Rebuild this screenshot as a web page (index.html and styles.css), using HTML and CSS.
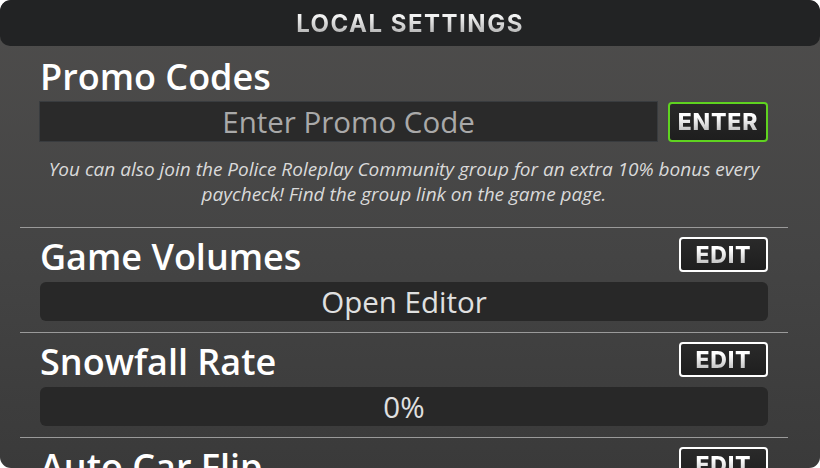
FILE: index.html
```html
<!DOCTYPE html>
<html>
<head>
<meta charset="utf-8">
<link rel="stylesheet" href="styles.css">
</head>
<body>
<div class="panel">
  <header class="header"><span class="header-text">LOCAL SETTINGS</span></header>
  <div class="content">
    <section class="promo">
      <h2 class="title">Promo Codes</h2>
      <div class="promo-row">
        <div class="input">Enter Promo Code</div>
        <button class="btn btn-enter"><span class="btn-text">ENTER</span></button>
      </div>
      <p class="note">You can also join the Police Roleplay Community group for an extra 10% bonus every paycheck! Find the group link on the game page.</p>
    </section>
    <section class="setting">
      <div class="setting-head">
        <h2 class="title">Game Volumes</h2>
        <button class="btn btn-edit"><span class="btn-text">EDIT</span></button>
      </div>
      <div class="bar">Open Editor</div>
    </section>
    <section class="setting">
      <div class="setting-head">
        <h2 class="title">Snowfall Rate</h2>
        <button class="btn btn-edit"><span class="btn-text">EDIT</span></button>
      </div>
      <div class="bar">0%</div>
    </section>
    <section class="setting">
      <div class="setting-head">
        <h2 class="title">Auto Car Flip</h2>
        <button class="btn btn-edit"><span class="btn-text">EDIT</span></button>
      </div>
      <div class="bar">Enabled</div>
    </section>
  </div>
</div>
</body>
</html>
```
FILE: styles.css
```css
html, body {
  margin: 0;
  padding: 0;
  background: #ffffff;
}
.panel {
  width: 820px;
  height: 468px;
  border-radius: 11px;
  overflow: hidden;
  background: linear-gradient(180deg, #4e4d4c 0%, #444444 55%, #3a3a3a 100%);
  font-family: "Open Sans", "Noto Sans", sans-serif;
  color: #ffffff;
}
.header {
  height: 46px;
  background: #222324;
  border-radius: 10px;
  display: flex;
  align-items: center;
  justify-content: center;
  font-family: Inter, "DejaVu Sans", sans-serif;
  font-weight: 700;
  font-size: 24px;
  letter-spacing: 1.5px;
  color: #d8d8d8;
}
.header-text {
  background: linear-gradient(180deg, #f2f2f2 25%, #b9b9b9 80%);
  -webkit-background-clip: text;
  background-clip: text;
  color: transparent;
}
.content {
  padding: 0 32px 0 20px;
}
.promo {
  padding: 8px 20px 0;
  height: 173px;
}
.title {
  margin: 0;
  font-size: 36px;
  font-weight: 600;
  line-height: 46px;
  color: #ffffff;
}
.promo-row {
  display: flex;
  align-items: center;
  gap: 10px;
  margin-top: 1px;
}
.input {
  flex: 1;
  height: 39px;
  background: #2a2a2a;
  border: 1px solid #393c3f;
  display: flex;
  align-items: center;
  justify-content: center;
  font-size: 29.5px;
  color: #a9a9a9;
  margin-left: -1px;
}
.btn {
  font-family: Inter, "DejaVu Sans", sans-serif;
  font-weight: 800;
  font-size: 23px;
  color: #eeeeee;
  background: linear-gradient(180deg, #2a2a2a 0%, #1e1e1e 100%);
  border-radius: 4px;
  padding: 0;
  display: flex;
  align-items: center;
  justify-content: center;
  letter-spacing: 0.8px;
}
.btn-text {
  background: linear-gradient(180deg, #ffffff 30%, #bdbdbd 85%);
  -webkit-background-clip: text;
  background-clip: text;
  color: transparent;
}
.btn-enter {
  width: 100px;
  height: 40px;
  border: 2px solid #5fd320;
}
.btn-edit {
  width: 89px;
  height: 35px;
  border: 2px solid #ffffff;
}
.note {
  margin: 15px 0 0;
  text-align: center;
  font-style: italic;
  font-size: 19px;
  line-height: 25px;
  color: #dadada;
}
.setting {
  border-top: 1px solid #9a9a9a;
  padding: 9px 20px 11px;
}
.setting-head {
  display: flex;
  justify-content: space-between;
  align-items: flex-end;
  height: 35px;
}
.setting-head .title {
  margin-bottom: -8px;
}
.bar {
  margin-top: 10px;
  height: 39px;
  background: #282828;
  border-radius: 6px;
  display: flex;
  align-items: center;
  justify-content: center;
  font-size: 29.5px;
  color: #e0e0e0;
}
```
